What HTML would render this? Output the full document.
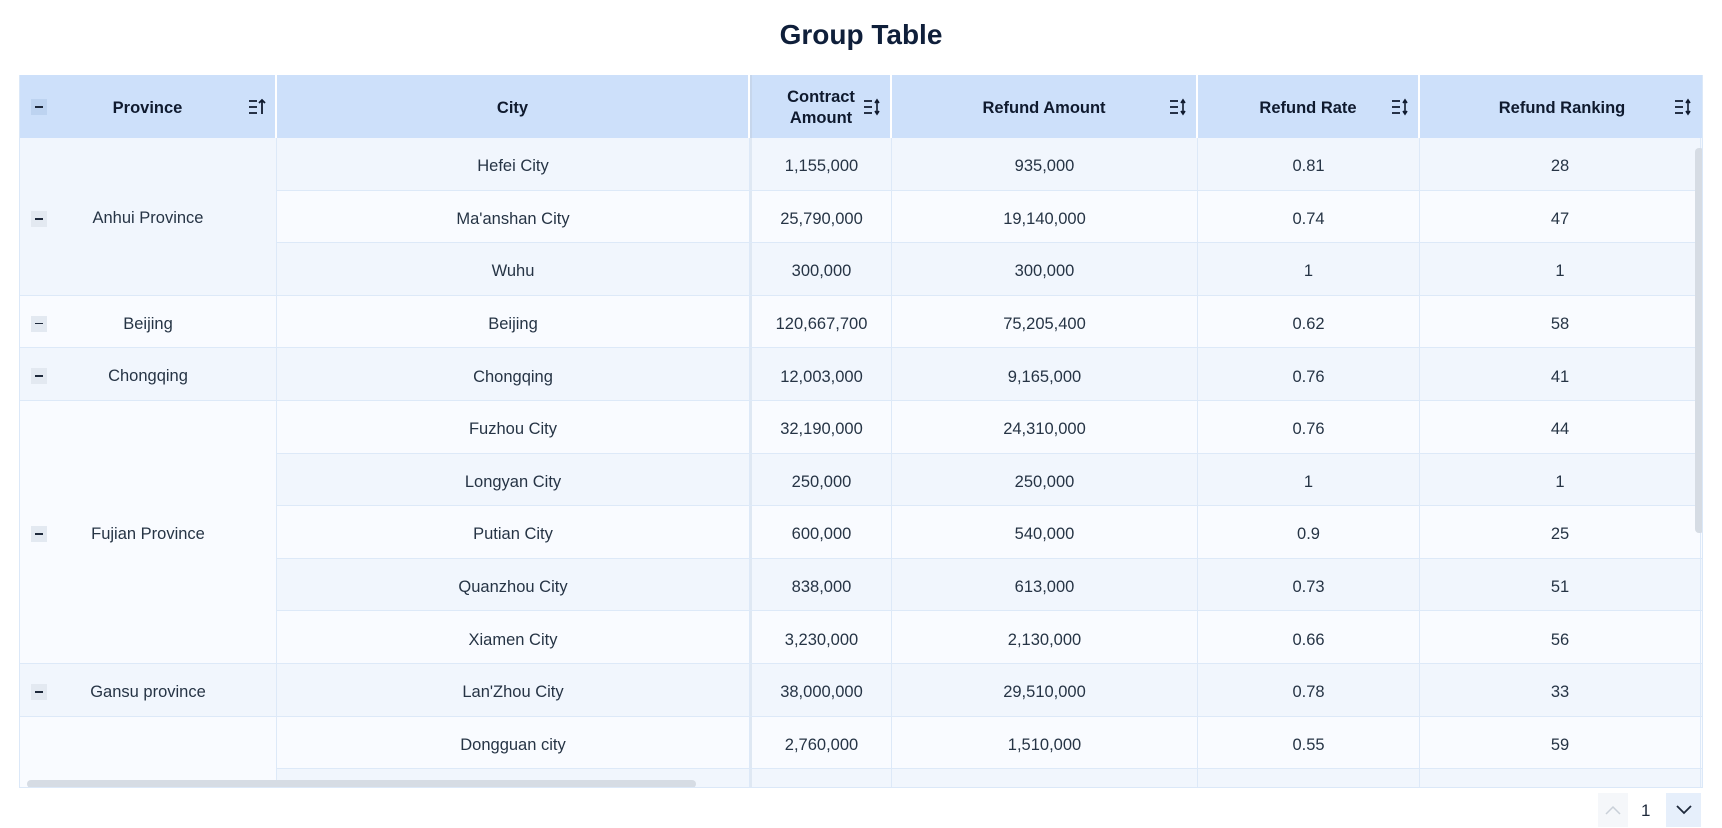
<!DOCTYPE html>
<html><head><meta charset="utf-8"><style>
*{box-sizing:border-box;margin:0;padding:0}
html,body{width:1722px;height:828px;overflow:hidden}
body{background:#fff;font-family:"Liberation Sans",sans-serif;color:#1e293b;position:relative}
h1{position:absolute;top:19px;left:0;width:1722px;text-align:center;font-size:28px;font-weight:bold;color:#0f1f3a}
#t{position:absolute;left:19px;top:75px;width:1684px;height:713px;overflow:hidden;border:1px solid #dbe8f8;border-top:none}
.hd{position:absolute;top:0;left:0;height:63px;width:1684px;display:flex;background:#cde0fa}
.hd div{height:63px;padding-top:3px;border-right:2px solid #fff;display:flex;align-items:center;justify-content:center;font-weight:bold;font-size:16.5px;color:#0f1a2e;position:relative;text-align:center;line-height:21px}
.hd svg{position:absolute;right:8px;top:22px}
.body{position:absolute;top:63px;left:0;width:1684px}
.r{display:flex;height:52.6px;border-bottom:1px solid #dde9f8}
.r div{border-right:1px solid #dde9f8;display:flex;align-items:center;justify-content:center;font-size:16.5px;color:#263445;padding-top:6px}
.r div:first-child{border-left:2px solid #dfe8f3}
.a{background:#f1f6fd}.b{background:#f9fbff}
.p{position:absolute;left:0;width:257px;border-right:1px solid #dde9f8;border-bottom:1px solid #dde9f8;display:flex;align-items:center;justify-content:center;font-size:16.5px;color:#263445;padding-top:5px}
.m{position:absolute;left:11px;width:16px;height:16px;background:#e3e9f1}
.m:after{content:"";position:absolute;left:4px;top:7px;width:8px;height:1.5px;background:#1e293b}
.c1{width:473px}.c2{width:142px}.c3{width:306px}.c4{width:222px}.c5{width:281px}
</style></head><body>
<h1>Group Table</h1>
<div id="t">
<div class="hd">
<div style="width:257px"><span class="m" style="top:24px;background:#bdd3f0"></span>Province<svg width="20" height="20" viewBox="0 0 20 20"><path d="M2 4h8M2 10h8M2 16h8" stroke="#0f1a2e" stroke-width="1.8"/><path d="M15 17V3M12 6l3-3 3 3" stroke="#0f1a2e" stroke-width="1.8" fill="none"/></svg></div>
<div style="width:473px">City</div>
<div style="width:142px;border-left:2px solid #c6d6ec">Contract<br>Amount<svg width="20" height="20" viewBox="0 0 20 20"><path d="M2 4h8M2 10h8M2 16h8" stroke="#0f1a2e" stroke-width="1.8"/><path d="M15 4v12M13 6l2-3 2 3M13 14l2 3 2-3" stroke="#0f1a2e" stroke-width="1.6" fill="none"/></svg></div>
<div style="width:306px">Refund Amount<svg width="20" height="20" viewBox="0 0 20 20"><path d="M2 4h8M2 10h8M2 16h8" stroke="#0f1a2e" stroke-width="1.8"/><path d="M15 4v12M13 6l2-3 2 3M13 14l2 3 2-3" stroke="#0f1a2e" stroke-width="1.6" fill="none"/></svg></div>
<div style="width:222px">Refund Rate<svg width="20" height="20" viewBox="0 0 20 20"><path d="M2 4h8M2 10h8M2 16h8" stroke="#0f1a2e" stroke-width="1.8"/><path d="M15 4v12M13 6l2-3 2 3M13 14l2 3 2-3" stroke="#0f1a2e" stroke-width="1.6" fill="none"/></svg></div>
<div style="width:284px;border-right:none">Refund Ranking<svg width="20" height="20" viewBox="0 0 20 20" style="right:11px"><path d="M2 4h8M2 10h8M2 16h8" stroke="#0f1a2e" stroke-width="1.8"/><path d="M15 4v12M13 6l2-3 2 3M13 14l2 3 2-3" stroke="#0f1a2e" stroke-width="1.6" fill="none"/></svg></div>
</div>
<div class="body">
<div class="r a"><div style="width:257px;border:none"></div><div class="c1">Hefei City</div><div class="c2" style="border-left:2px solid #dfe8f3">1,155,000</div><div class="c3">935,000</div><div class="c4">0.81</div><div class="c5">28</div></div>
<div class="r b"><div style="width:257px;border:none"></div><div class="c1">Ma'anshan City</div><div class="c2" style="border-left:2px solid #dfe8f3">25,790,000</div><div class="c3">19,140,000</div><div class="c4">0.74</div><div class="c5">47</div></div>
<div class="r a"><div style="width:257px;border:none"></div><div class="c1">Wuhu</div><div class="c2" style="border-left:2px solid #dfe8f3">300,000</div><div class="c3">300,000</div><div class="c4">1</div><div class="c5">1</div></div>
<div class="r b"><div style="width:257px;border:none"></div><div class="c1">Beijing</div><div class="c2" style="border-left:2px solid #dfe8f3">120,667,700</div><div class="c3">75,205,400</div><div class="c4">0.62</div><div class="c5">58</div></div>
<div class="r a"><div style="width:257px;border:none"></div><div class="c1">Chongqing</div><div class="c2" style="border-left:2px solid #dfe8f3">12,003,000</div><div class="c3">9,165,000</div><div class="c4">0.76</div><div class="c5">41</div></div>
<div class="r b"><div style="width:257px;border:none"></div><div class="c1">Fuzhou City</div><div class="c2" style="border-left:2px solid #dfe8f3">32,190,000</div><div class="c3">24,310,000</div><div class="c4">0.76</div><div class="c5">44</div></div>
<div class="r a"><div style="width:257px;border:none"></div><div class="c1">Longyan City</div><div class="c2" style="border-left:2px solid #dfe8f3">250,000</div><div class="c3">250,000</div><div class="c4">1</div><div class="c5">1</div></div>
<div class="r b"><div style="width:257px;border:none"></div><div class="c1">Putian City</div><div class="c2" style="border-left:2px solid #dfe8f3">600,000</div><div class="c3">540,000</div><div class="c4">0.9</div><div class="c5">25</div></div>
<div class="r a"><div style="width:257px;border:none"></div><div class="c1">Quanzhou City</div><div class="c2" style="border-left:2px solid #dfe8f3">838,000</div><div class="c3">613,000</div><div class="c4">0.73</div><div class="c5">51</div></div>
<div class="r b"><div style="width:257px;border:none"></div><div class="c1">Xiamen City</div><div class="c2" style="border-left:2px solid #dfe8f3">3,230,000</div><div class="c3">2,130,000</div><div class="c4">0.66</div><div class="c5">56</div></div>
<div class="r a"><div style="width:257px;border:none"></div><div class="c1">Lan'Zhou City</div><div class="c2" style="border-left:2px solid #dfe8f3">38,000,000</div><div class="c3">29,510,000</div><div class="c4">0.78</div><div class="c5">33</div></div>
<div class="r b"><div style="width:257px;border:none"></div><div class="c1">Dongguan city</div><div class="c2" style="border-left:2px solid #dfe8f3">2,760,000</div><div class="c3">1,510,000</div><div class="c4">0.55</div><div class="c5">59</div></div>
<div class="r a"><div style="width:257px;border:none"></div><div class="c1"></div><div class="c2" style="border-left:2px solid #dfe8f3"></div><div class="c3"></div><div class="c4"></div><div class="c5"></div></div>
<div class="p a" style="top:0;height:157.8px"><span class="m" style="top:73px"></span>Anhui Province</div>
<div class="p b" style="top:157.8px;height:52.6px"><span class="m" style="top:20px"></span>Beijing</div>
<div class="p a" style="top:210.4px;height:52.6px"><span class="m" style="top:20px"></span>Chongqing</div>
<div class="p b" style="top:263px;height:263px"><span class="m" style="top:125px"></span>Fujian Province</div>
<div class="p a" style="top:526px;height:52.6px"><span class="m" style="top:20px"></span>Gansu province</div>
<div class="p b" style="top:578.6px;height:200px;border-bottom:none"></div>
</div>
<div style="position:absolute;left:7px;top:705px;width:669px;height:8px;border-radius:4px;background:#d6dce4"></div>
<div style="position:absolute;left:1675px;top:73px;width:9px;height:385px;border-radius:4px;background:#d6dce4"></div>
</div>
<div style="position:absolute;left:1598px;top:793px;width:30px;height:34px;background:#f5f7fa;display:flex;align-items:center;justify-content:center"><svg width="16" height="10" viewBox="0 0 16 10"><path d="M1 9l7-7 7 7" stroke="#c9d0d8" stroke-width="1.5" fill="none"/></svg></div>
<div style="position:absolute;left:1641px;top:801px;font-size:17px;color:#1e293b">1</div>
<div style="position:absolute;left:1666px;top:793px;width:35px;height:34px;background:#e6effb;display:flex;align-items:center;justify-content:center"><svg width="16" height="10" viewBox="0 0 16 10"><path d="M1 1l7 7 7-7" stroke="#1e293b" stroke-width="1.8" fill="none"/></svg></div>
</body></html>
